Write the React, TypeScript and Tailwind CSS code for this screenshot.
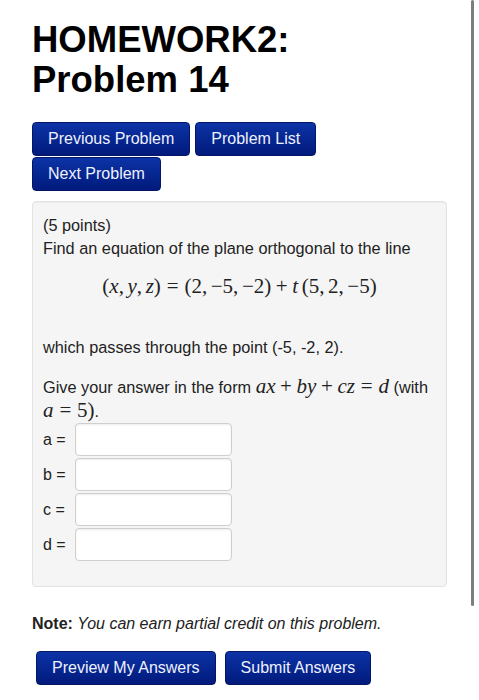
import React from "react";

const sans = "font-['Liberation_Sans',Arial,Helvetica,sans-serif]";
const serif = "font-['Liberation_Serif','Times_New_Roman',serif]";

function NavButton({ children }: { children: React.ReactNode }) {
  return (
    <button
      type="button"
      className="h-[34px] rounded-[4px] border border-[#031766] bg-linear-to-b from-[#0d33a6] to-[#021a7c] px-[15px] text-[16px] leading-[20px] text-[#eef1ff]"
    >
      {children}
    </button>
  );
}

function AnswerRow({ label }: { label: string }) {
  return (
    <div className="flex h-[33px] items-center">
      <span className="w-[32px] text-[16px] text-[#222]">{label} =</span>
      <input
        type="text"
        className="h-[33px] w-[157px] rounded-[4px] border border-[#cfcfcf] bg-white shadow-[inset_0_1px_2px_rgba(0,0,0,0.08)] outline-none"
      />
    </div>
  );
}

function I({ children }: { children: React.ReactNode }) {
  return <span className="italic">{children}</span>;
}

export default function App() {
  return (
    <div className={`relative min-h-[700px] bg-white ${sans}`}>
      <div className="px-[32px] pt-[20px]">
        <h1 className="text-[36.5px] font-bold leading-[40px] text-black">
          HOMEWORK2:
          <br />
          Problem 14
        </h1>

        <div className="mt-[22px] flex flex-col gap-[1px]">
          <div className="flex gap-[5px]">
            <NavButton>Previous Problem</NavButton>
            <NavButton>Problem List</NavButton>
          </div>
          <div className="flex">
            <NavButton>Next Problem</NavButton>
          </div>
        </div>

        <div className="mt-[10px] rounded-[4px] border border-[#e3e3e3] bg-[#f5f5f5] px-[10px] pb-[25px] pt-[12px] text-[16.3px] text-[#222] shadow-[inset_0_1px_1px_rgba(0,0,0,0.04)]">
          <p className="leading-[23px]">(5 points)</p>
          <p className="leading-[23px]">Find an equation of the plane orthogonal to the line</p>

          <div className={`flex h-[54px] items-center justify-center text-[21px] ${serif}`}>
            <span>
              (<I>x</I>,<span className="ml-[0.17em]" />
              <I>y</I>,<span className="ml-[0.17em]" />
              <I>z</I>)<span className="mx-[0.28em]">=</span>(2,<span className="ml-[0.17em]" />
              −5,<span className="ml-[0.17em]" />
              −2)<span className="mx-[0.22em]">+</span>
              <I>t</I>
              <span className="ml-[0.17em]" />
              (5,<span className="ml-[0.17em]" />
              2,<span className="ml-[0.17em]" />
              −5)
            </span>
          </div>

          <p className="mt-[22px] leading-[23px]">which passes through the point (-5, -2, 2).</p>

          <p className="mt-[16px] leading-[24px]">
            <span className="whitespace-nowrap">
              Give your answer in the form{" "}
              <span className={`text-[21px] leading-[20px] ${serif}`}>
                <I>ax</I>
                <span className="mx-[0.22em]">+</span>
                <I>by</I>
                <span className="mx-[0.22em]">+</span>
                <I>cz</I>
                <span className="mx-[0.28em]">=</span>
                <I>d</I>
              </span>{" "}
              (with
            </span>
            <br />
            <span className={`text-[21px] leading-[20px] ${serif}`}>
              <I>a</I>
              <span className="mx-[0.28em]">=</span>5)
            </span>
            .
          </p>

          <div className="mt-[0px] flex flex-col gap-[2px]">
            <AnswerRow label="a" />
            <AnswerRow label="b" />
            <AnswerRow label="c" />
            <AnswerRow label="d" />
          </div>
        </div>

        <p className="mt-[25px] text-[16px] leading-[23px] text-[#222]">
          <span className="font-bold">Note:</span> <span className="italic">You can earn partial credit on this problem.</span>
        </p>

        <div className="ml-[4px] mt-[16px] flex gap-[9px]">
          <NavButton>Preview My Answers</NavButton>
          <NavButton>Submit Answers</NavButton>
        </div>
      </div>

      <div className="absolute right-[5px] top-0 h-[606px] w-[3px] rounded-full bg-[#7d7d7d]" />
    </div>
  );
}
